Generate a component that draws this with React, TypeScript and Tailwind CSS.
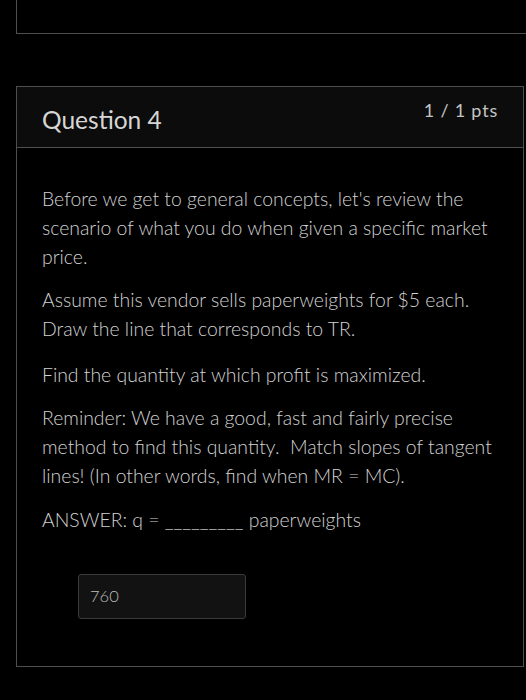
export default function App() {
  const font = { fontFamily: "Lato, 'Open Sans', sans-serif" };
  return (
    <div className="min-h-[700px] w-[526px] overflow-hidden bg-black text-[#d2d2d2]" style={font}>
      {/* previous question, cut off at the top */}
      <div className="ml-4 h-[34px] w-[520px] border-b border-l border-[#4f4f4f]" />

      <div className="ml-4 mt-[52px] w-[508px] border border-[#4f4f4f]">
        <div className="flex h-[61px] items-start justify-between border-b border-[#4f4f4f] bg-[#0c0c0c] pl-[25px] pr-[25px]">
          <h2 className="mt-[15px] text-[24.5px] leading-[35px] text-[#d6d6d6]">Question 4</h2>
          <span className="mt-[10px] text-[18px] leading-[26px] tracking-[0.8px] text-[#c4c4c4]">1 / 1 pts</span>
        </div>

        <div className="px-[25px] pt-[36px] pb-[47px] text-[19.4px] leading-[29px] font-light">
          <p>
            Before we get to general concepts, let's review the scenario of what you do when given a
            specific market price.
          </p>
          <p className="mt-[14px]">
            Assume this vendor sells paperweights for $5 each. Draw the line that corresponds to TR.
          </p>
          <p className="mt-[17px]">Find the quantity at which profit is maximized.</p>
          <p className="mt-[14px]">
            Reminder: We have a good, fast and fairly precise method to find this quantity.&nbsp; Match
            slopes of tangent lines! (In other words, find when MR = MC).
          </p>
          <p className="mt-[15px]">ANSWER: q = _________ paperweights</p>

          <div className="ml-[36px] mt-[40px] flex h-[45px] w-[168px] items-center rounded-[3px] border border-[#3a3a3a] bg-[#121212] px-[11px] text-[16.5px] text-[#bdbdbd]">
            760
          </div>
        </div>
      </div>
    </div>
  );
}
